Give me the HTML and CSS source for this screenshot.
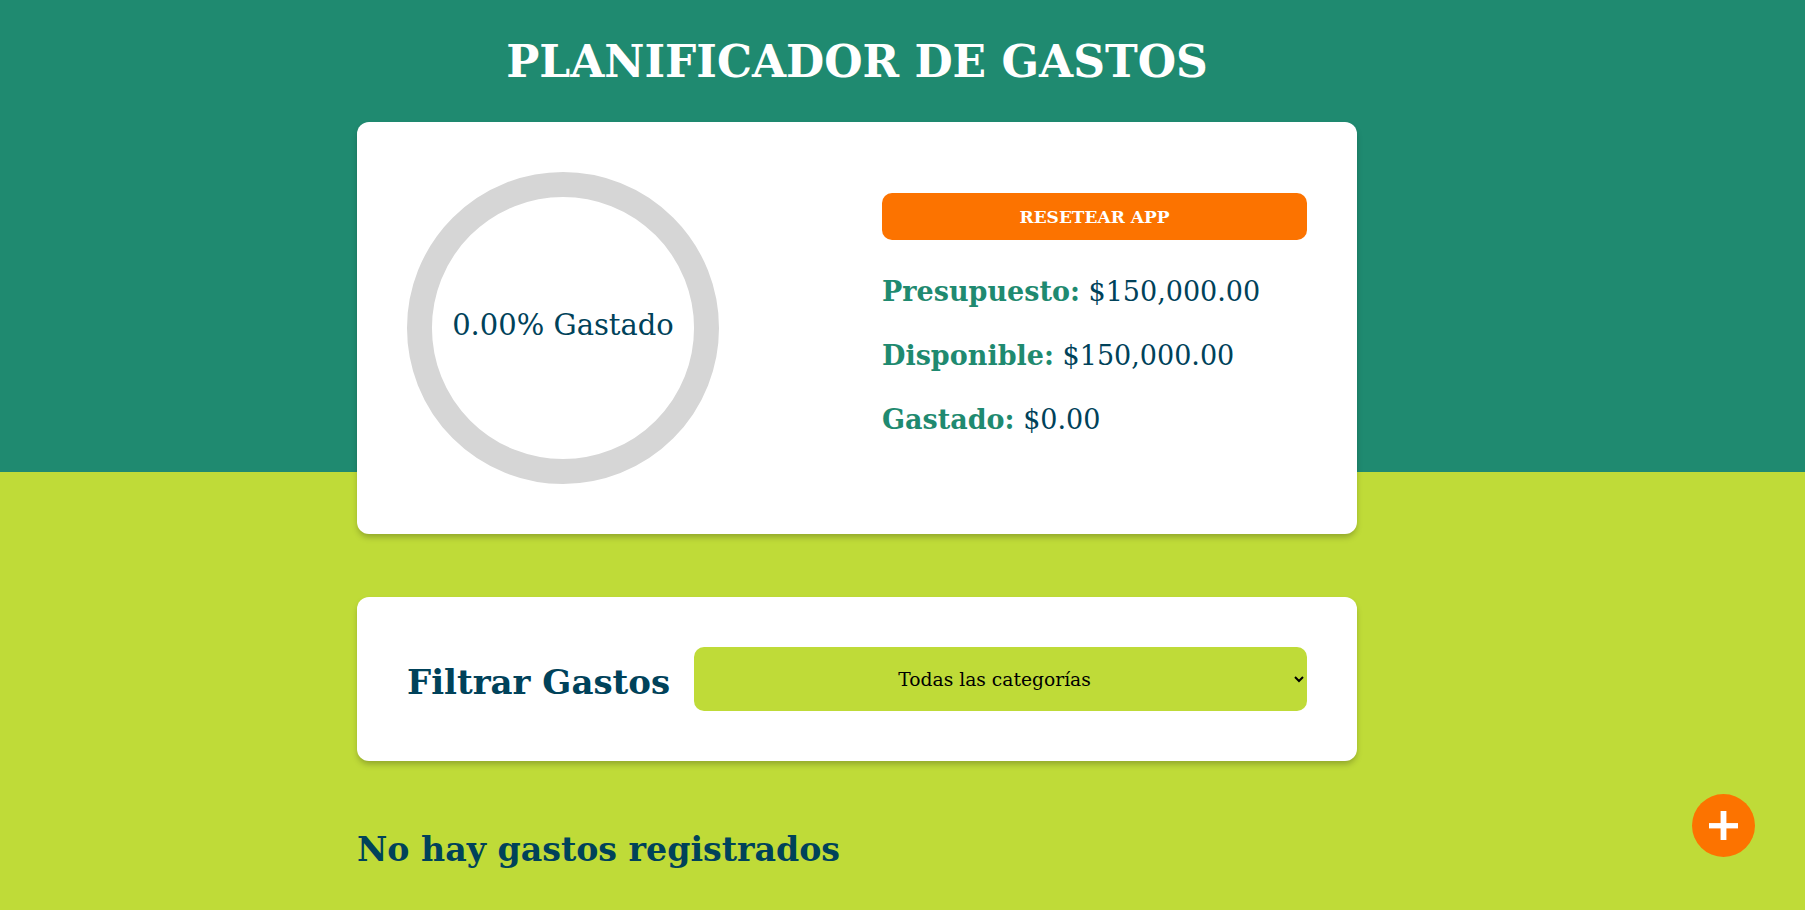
FILE: index.html
```html
<!DOCTYPE html>
<html lang="es">
<head>
<meta charset="utf-8">
<title>Planificador de Gastos</title>
<link rel="stylesheet" href="styles.css">
</head>
<body>
<header class="header">
  <div class="shell">
    <h1 class="title">PLANIFICADOR DE GASTOS</h1>
    <section class="card budget">
      <div class="progress">
        <svg class="ring" viewBox="0 0 100 100" aria-hidden="true">
          <circle cx="50" cy="50" r="46" fill="none" stroke="#d6d6d6" stroke-width="8"/>
        </svg>
        <span class="progress-text">0.00% Gastado</span>
      </div>
      <div class="summary">
        <button class="reset" type="button">RESETEAR APP</button>
        <p class="line"><span class="label">Presupuesto:</span> $150,000.00</p>
        <p class="line"><span class="label">Disponible:</span> $150,000.00</p>
        <p class="line"><span class="label">Gastado:</span> $0.00</p>
      </div>
    </section>
  </div>
</header>
<main class="shell">
  <section class="card filter">
    <label class="filter-label" for="cat">Filtrar Gastos</label>
    <select id="cat" class="filter-select">
      <option>Todas las categorías</option>
    </select>
  </section>
  <h2 class="empty">No hay gastos registrados</h2>
</main>
<button class="fab" type="button" aria-label="Nuevo gasto">
  <svg viewBox="0 0 30 30" width="30" height="30" aria-hidden="true">
    <rect x="12" y="0" width="6" height="30" fill="#fff"/>
    <rect x="0" y="12.5" width="30" height="5.5" fill="#fff"/>
  </svg>
</button>
</body>
</html>
```

FILE: styles.css
```css
* { box-sizing: border-box; }

html, body {
  margin: 0;
  padding: 0;
}

body {
  background: #BFDB38;
  font-family: "DejaVu Serif", "Liberation Serif", serif;
  color: #00425A;
  min-height: 910px;
}

.header {
  background: #1F8A70;
  display: flex;
  flex-direction: column;
}

.shell {
  width: 1714px;
  display: flex;
  flex-direction: column;
  align-items: center;
}

.title {
  margin: 40px 0 38px;
  font-size: 44px;
  line-height: 44px;
  font-weight: 700;
  color: #fff;
  text-align: center;
}

.card {
  width: 1000px;
  background: #fff;
  border-radius: 12px;
  padding: 50px;
  box-shadow: 0 4px 6px -1px rgba(0, 0, 0, 0.25);
}

.budget {
  display: grid;
  grid-template-columns: 1fr 1fr;
  column-gap: 50px;
  margin-bottom: -62px;
}

.progress {
  display: grid;
  width: 312px;
  height: 312px;
  place-items: center;
}

.ring, .progress-text {
  grid-area: 1 / 1;
}

.ring {
  width: 312px;
  height: 312px;
  display: block;
}

.progress-text {
  font-size: 29px;
  line-height: 30px;
  color: #00425A;
  margin-bottom: 7px;
}

.summary {
  padding-top: 21px;
  display: flex;
  flex-direction: column;
}

.reset {
  height: 47px;
  width: 100%;
  border: none;
  border-radius: 10px;
  background: #FC7300;
  color: #fff;
  font-family: "DejaVu Serif", "Liberation Serif", serif;
  font-weight: 700;
  font-size: 17px;
  margin-bottom: 20px;
  cursor: pointer;
}

.line {
  margin: 0;
  font-size: 27px;
  line-height: 64px;
  color: #00425A;
}

.label {
  color: #1F8A70;
  font-weight: 700;
}

.filter {
  margin-top: 125px;
  display: flex;
  align-items: center;
  gap: 24px;
}

.filter-label {
  font-size: 34px;
  font-weight: 700;
  color: #00425A;
  white-space: nowrap;
  margin-top: 5px;
}

.filter-select {
  flex: 1;
  height: 64px;
  border: none;
  border-radius: 10px;
  background-color: #BFDB38;
  color: #000;
  font-family: "DejaVu Serif", "Liberation Serif", serif;
  font-size: 18.7px;
  text-align: center;
  text-align-last: center;
  padding: 0 10px;
}

.empty {
  width: 1000px;
  margin: 72px 0 0;
  font-size: 33.2px;
  line-height: 34px;
  font-weight: 700;
  color: #00425A;
}

.fab {
  position: fixed;
  right: 50px;
  bottom: 53px;
  width: 63px;
  height: 63px;
  border-radius: 50%;
  border: none;
  background: #FC7300;
  display: flex;
  align-items: center;
  justify-content: center;
  padding: 0;
  cursor: pointer;
}

.fab svg {
  width: 29px;
  height: 29px;
}
```
